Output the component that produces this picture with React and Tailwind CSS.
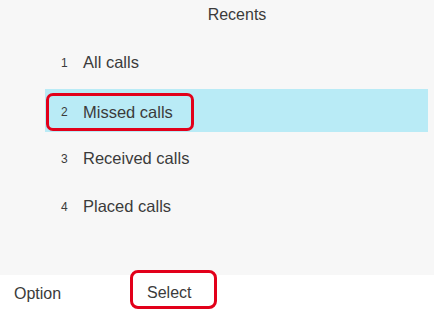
const ITEMS = [
  { n: 1, label: "All calls" },
  { n: 2, label: "Missed calls", selected: true },
  { n: 3, label: "Received calls" },
  { n: 4, label: "Placed calls" },
];

export default function App() {
  return (
    <div
      className="w-[434px] h-[314px] overflow-hidden flex flex-col text-[#3b3b3b]"
      style={{ fontFamily: '"Liberation Sans", Arial, sans-serif' }}
    >
      <div className="h-[275px] bg-[#f7f7f7] flex flex-col">
        {/* Title */}
        <div className="h-[30px] pl-[40px] flex items-center justify-center text-[16px]">
          Recents
        </div>

        {/* Menu list */}
        <div className="mt-[11px] flex flex-col gap-[5px] ml-[45px] mr-[6px]">
          {ITEMS.map((item) =>
            item.selected ? (
              <div key={item.n} className="h-[43px] bg-[#b9ebf6] flex items-end pb-px">
                <div className="ml-px h-[38px] w-[148px] border-[3px] border-[#e2001a] rounded-[7px] flex items-center pl-[12px]">
                  <span className="w-[22px] text-[12px]">{item.n}</span>
                  <span className="text-[16.5px]">{item.label}</span>
                </div>
              </div>
            ) : (
              <div key={item.n} className="h-[43px] flex items-center pl-[16px]">
                <span className="w-[22px] text-[12px]">{item.n}</span>
                <span className="text-[16.5px]">{item.label}</span>
              </div>
            )
          )}
        </div>
      </div>

      {/* Softkey bar */}
      <div className="flex-1 bg-white flex items-start text-[16px]">
        <div className="w-[130px] h-[37px] pl-[14px] flex items-center">Option</div>
        <div className="-mt-[5px] h-[39px] w-[87px] border-[3px] border-[#e2001a] rounded-[8px] bg-white flex items-center pl-[14px] pt-[6px]">
          Select
        </div>
      </div>
    </div>
  );
}
